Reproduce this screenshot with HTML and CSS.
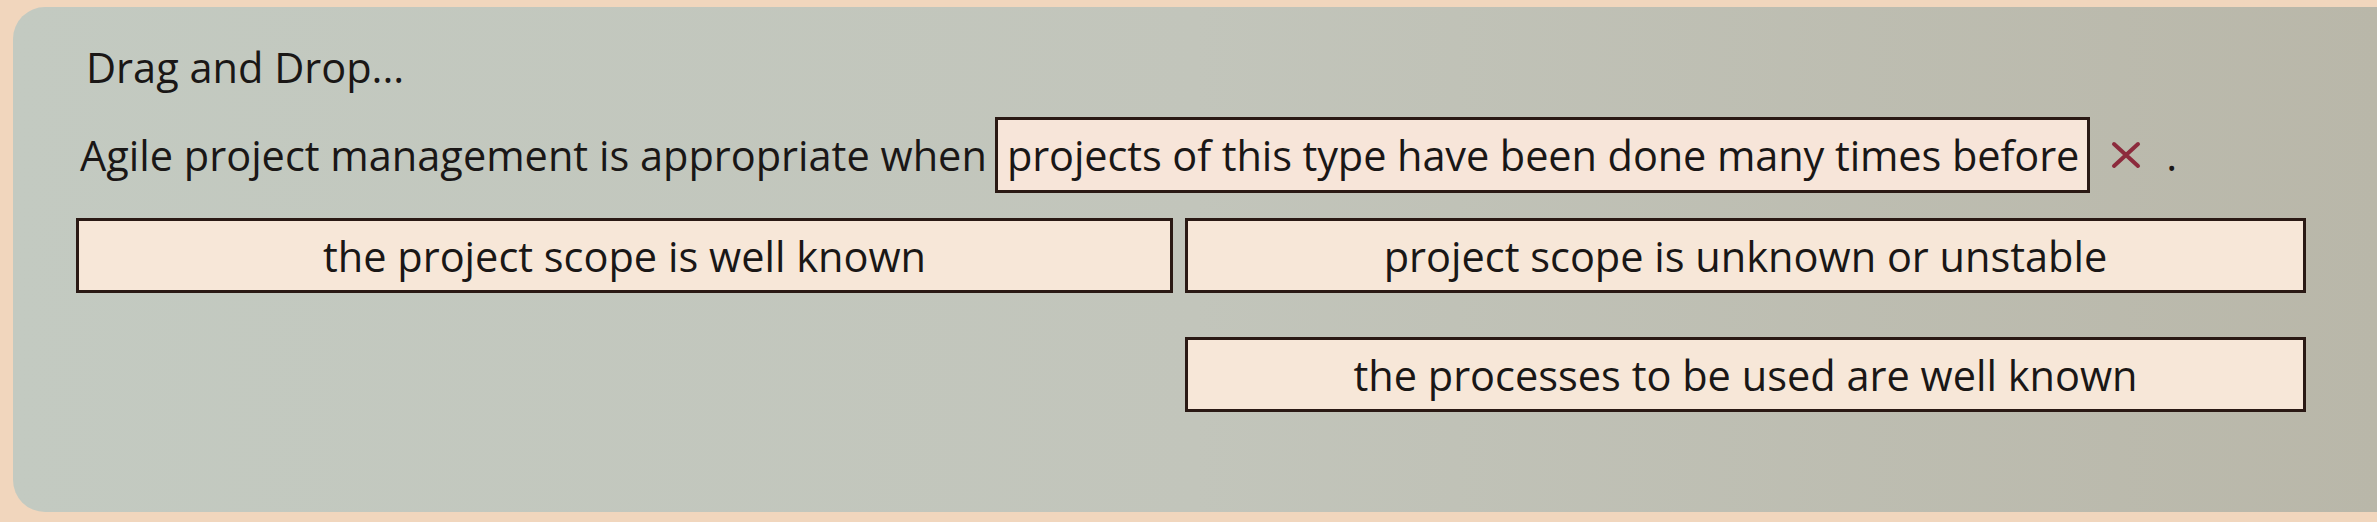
FILE: index.html
```html
<!DOCTYPE html>
<html lang="en">
<head>
    <meta charset="UTF-8">
    <meta name="viewport" content="width=device-width, initial-scale=1.0">
    <title>Drag and Drop</title>
    <link rel="stylesheet" href="styles.css">
</head>
<body>
    <div class="question">
        <h2 class="title">Drag and Drop...</h2>

        <div class="sentence">
            <span class="prompt">Agile project management is appropriate when</span>
            <span class="dropzone filled">projects of this type have been done many times before</span>
            <span class="mark wrong" title="Incorrect">
                <svg width="32" height="28" viewBox="0 0 32 28">
                    <path d="M4 3 L28 25 M28 3 L4 25" stroke="#8c2a3c" stroke-width="4" stroke-linecap="round" fill="none"/>
                </svg>
            </span>
            <span class="stop">.</span>
        </div>

        <div class="options">
            <div class="option">the project scope is well known</div>
            <div class="option">project scope is unknown or unstable</div>
            <div class="option slot-empty"></div>
            <div class="option">the processes to be used are well known</div>
        </div>
    </div>
</body>
</html>
```

FILE: styles.css
```css
body {
    margin: 0;
    padding: 0;
    background: #f1d6bd;
    font-family: 'Open Sans', 'Noto Sans', sans-serif;
    color: #1a1716;
}

.question {
    margin: 7px 0 10px 13px;
    height: 505px;
    box-sizing: border-box;
    padding: 36px 71px 0 63px;
    border-radius: 32px 0 0 32px;
    background: linear-gradient(90deg, #c3cac1 0%, #c2c5bb 50%, #b9b7a9 100%);
}

.title {
    margin: 0 0 26px 10px;
    font-size: 41.5px;
    font-weight: 400;
    line-height: 48px;
}

.sentence {
    display: flex;
    align-items: center;
    font-size: 41.5px;
    line-height: 48px;
    margin-left: 4px;
}

.dropzone {
    margin-left: 8px;
    padding: 11px 8px 11px 9px;
    border: 3px solid #2a1914;
    background: #f7e5d9;
    letter-spacing: -0.1px;
}

.mark {
    display: flex;
    margin-left: 20px;
}

.stop {
    margin-left: 24px;
}

.options {
    display: grid;
    grid-template-columns: 1096fr 1120fr;
    column-gap: 12px;
    row-gap: 44px;
    margin-top: 25px;
}

.option {
    height: 75px;
    box-sizing: border-box;
    display: flex;
    align-items: center;
    justify-content: center;
    border: 3px solid #2a1914;
    background: #f7e7d8;
    font-size: 41.5px;
}

.slot-empty {
    visibility: hidden;
}
```
